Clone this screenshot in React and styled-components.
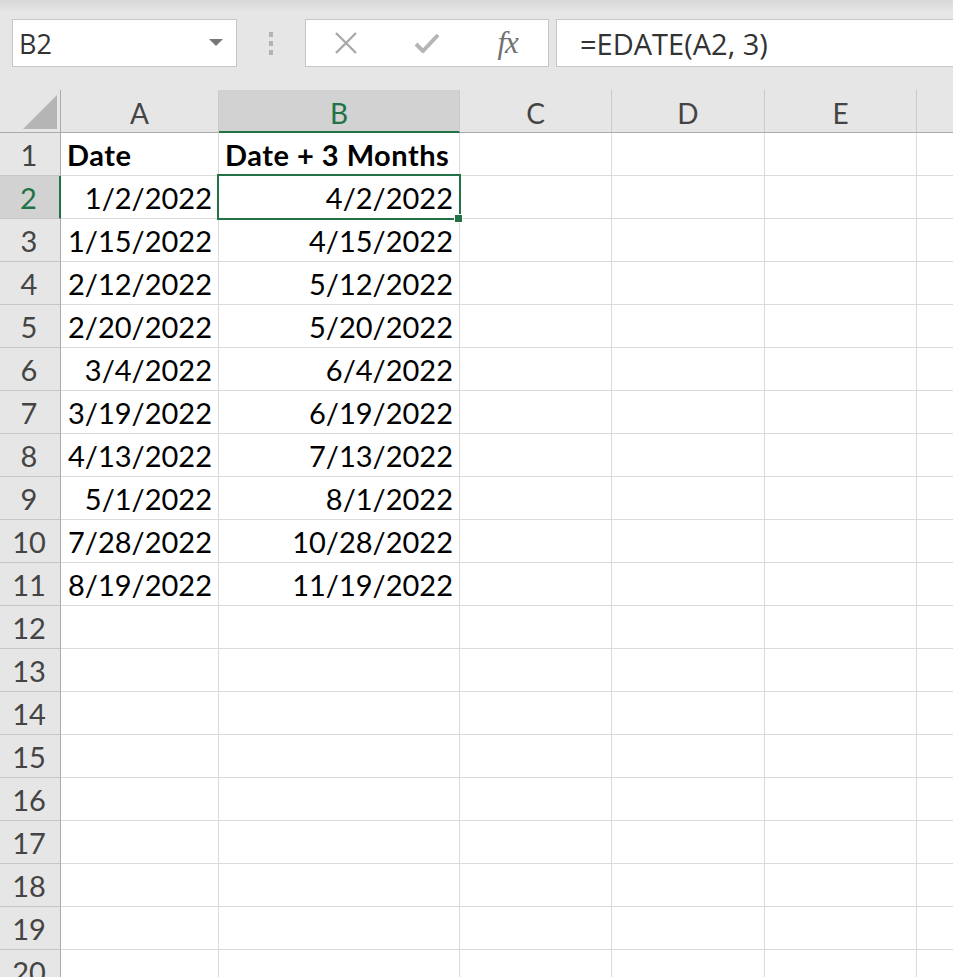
import React from 'react';
import styled, { createGlobalStyle } from 'styled-components';

const GlobalStyle = createGlobalStyle`
  body {
    margin: 0;
    background: #ffffff;
  }
  #root {
    height: 977px;
    overflow: hidden;
  }
`;

const GREEN = '#217346';

// F is only partly on screen, its letter falls past the right edge
const COLS = ['A', 'B', 'C', 'D', 'E', ''];

const ROWS = [
  ['1/2/2022', '4/2/2022'],
  ['1/15/2022', '4/15/2022'],
  ['2/12/2022', '5/12/2022'],
  ['2/20/2022', '5/20/2022'],
  ['3/4/2022', '6/4/2022'],
  ['3/19/2022', '6/19/2022'],
  ['4/13/2022', '7/13/2022'],
  ['5/1/2022', '8/1/2022'],
  ['7/28/2022', '10/28/2022'],
  ['8/19/2022', '11/19/2022'],
];

//Styles
const Window = styled.div`
  width: 953px;
  height: 977px;
  overflow: hidden;
  background: #ffffff;
`;

const Toolbar = styled.div`
  height: 90px;
  box-sizing: border-box;
  padding: 19px 0 0 12px;
  display: flex;
  align-items: flex-start;
  background: linear-gradient(#d8d8d8 0px, #e6e6e6 12px, #e6e6e6 100%);
  font-family: 'Open Sans', 'Noto Sans', sans-serif;
`;

const Box = styled.div`
  height: 48px;
  box-sizing: border-box;
  background: #ffffff;
  border: 1px solid #c6c6c6;
  display: flex;
  align-items: center;
`;

const NameBox = styled(Box)`
  width: 225px;
  padding: 0 13px 0 6px;
  justify-content: space-between;
  font-size: 27px;
  color: #333333;
`;

const Grip = styled.div`
  width: 68px;
  height: 48px;
  display: flex;
  flex-direction: column;
  align-items: center;
  justify-content: center;
  gap: 4px;

  span {
    width: 4px;
    height: 5px;
    background: #b3b3b3;
  }
`;

const FuncBox = styled(Box)`
  width: 244px;
`;

const FuncSlot = styled.div`
  width: 81px;
  height: 100%;
  display: flex;
  align-items: center;
  justify-content: center;
`;

const Fx = styled.span`
  font-family: 'Liberation Serif', 'DejaVu Serif', serif;
  font-style: italic;
  font-size: 31px;
  color: #707070;
  letter-spacing: -1px;
`;

const FormulaBox = styled(Box)`
  flex: 1;
  margin: 0 -4px 0 7px;
  padding-left: 23px;
  font-size: 29px;
  color: #333333;
`;

const Sheet = styled.div`
  position: relative;
  display: grid;
  grid-template-columns: 61px 158px 241px 152px 153px 152px 152px;
  grid-template-rows: 43px;
  grid-auto-rows: 43px;
  font-family: 'Lato', 'Liberation Sans', sans-serif;
`;

const Corner = styled.div`
  background: #e6e6e6;
  border-right: 1px solid #ababab;
  border-bottom: 1px solid #ababab;
  display: flex;
  align-items: flex-end;
  justify-content: flex-end;
  padding: 0 3px 3px 0;
`;

const ColHead = styled.div`
  background: ${p => (p.$active ? '#d2d2d2' : '#e6e6e6')};
  color: ${p => (p.$active ? GREEN : '#444444')};
  border-right: 1px solid #cacaca;
  border-bottom: ${p => (p.$active ? `2px solid ${GREEN}` : '1px solid #ababab')};
  font-size: 28px;
  display: flex;
  align-items: center;
  justify-content: center;
  padding-top: 4px;
`;

const RowHead = styled.div`
  background: ${p => (p.$active ? '#d2d2d2' : '#e6e6e6')};
  color: ${p => (p.$active ? GREEN : '#444444')};
  border-right: ${p => (p.$active ? `2px solid ${GREEN}` : '1px solid #ababab')};
  border-bottom: 1px solid #c6c6c6;
  font-size: 29px;
  display: flex;
  align-items: center;
  justify-content: center;
  padding-right: 2px;
`;

const Cell = styled.div`
  border-right: 1px solid #dadada;
  border-bottom: 1px solid #dadada;
  font-size: 29px;
  font-weight: ${p => (p.$bold ? 700 : 400)};
  letter-spacing: ${p => (p.$bold ? '0.5px' : '0')};
  color: #000000;
  display: flex;
  align-items: center;
  justify-content: ${p => (p.$right ? 'flex-end' : 'flex-start')};
  padding: 1px 6px 0 6px;
  white-space: nowrap;
  overflow: hidden;
`;

const Selection = styled.div`
  position: absolute;
  left: 217px;
  top: 84px;
  width: 244px;
  height: 46px;
  box-sizing: border-box;
  border: 2px solid ${GREEN};
  pointer-events: none;
`;

const FillHandle = styled.div`
  position: absolute;
  left: 454px;
  top: 124px;
  width: 9px;
  height: 9px;
  box-sizing: border-box;
  background: ${GREEN};
  border: 1px solid #ffffff;
`;
//styles end

const DropArrow = () => (
  <svg width="14" height="8" viewBox="0 0 14 8">
    <path d="M0 0 H14 L7 7 Z" fill="#777777" />
  </svg>
);

const CancelIcon = () => (
  <svg width="24" height="22" viewBox="0 0 24 22">
    <path d="M2 1 L22 21 M22 1 L2 21" stroke="#a9a9a9" strokeWidth="2.4" fill="none" />
  </svg>
);

const EnterIcon = () => (
  <svg width="26" height="22" viewBox="0 0 26 22">
    <path d="M2 12 L9 19 L24 3" stroke="#b5b5b5" strokeWidth="4" fill="none" strokeLinejoin="round" />
  </svg>
);

const CornerTriangle = () => (
  <svg width="34" height="34" viewBox="0 0 34 34">
    <path d="M34 0 V34 H0 Z" fill="#b5b5b5" />
  </svg>
);

const App = () => {
  const body = [];
  for (let r = 1; r <= 20; r++) {
    const data = r === 1 ? null : ROWS[r - 2];
    body.push(
      <RowHead key={`h${r}`} $active={r === 2}>
        {r}
      </RowHead>
    );
    COLS.forEach((col, i) => {
      let text = '';
      let bold = false;
      let right = false;
      if (r === 1 && i === 0) {
        text = 'Date';
        bold = true;
      } else if (r === 1 && i === 1) {
        text = 'Date + 3 Months';
        bold = true;
      } else if (data && i < 2) {
        text = data[i];
        right = true;
      }
      body.push(
        <Cell key={`${i}-${r}`} $bold={bold} $right={right}>
          {text}
        </Cell>
      );
    });
  }

  return (
    <Window>
      <GlobalStyle />
      <Toolbar>
        <NameBox>
          <span>B2</span>
          <DropArrow />
        </NameBox>
        <Grip>
          <span />
          <span />
          <span />
        </Grip>
        <FuncBox>
          <FuncSlot>
            <CancelIcon />
          </FuncSlot>
          <FuncSlot>
            <EnterIcon />
          </FuncSlot>
          <FuncSlot>
            <Fx>fx</Fx>
          </FuncSlot>
        </FuncBox>
        <FormulaBox>=EDATE(A2, 3)</FormulaBox>
      </Toolbar>
      <Sheet>
        <Corner>
          <CornerTriangle />
        </Corner>
        {COLS.map((col, i) => (
          <ColHead key={i} $active={col === 'B'}>
            {col}
          </ColHead>
        ))}
        {body}
        <Selection />
        <FillHandle />
      </Sheet>
    </Window>
  );
};

export default App;
